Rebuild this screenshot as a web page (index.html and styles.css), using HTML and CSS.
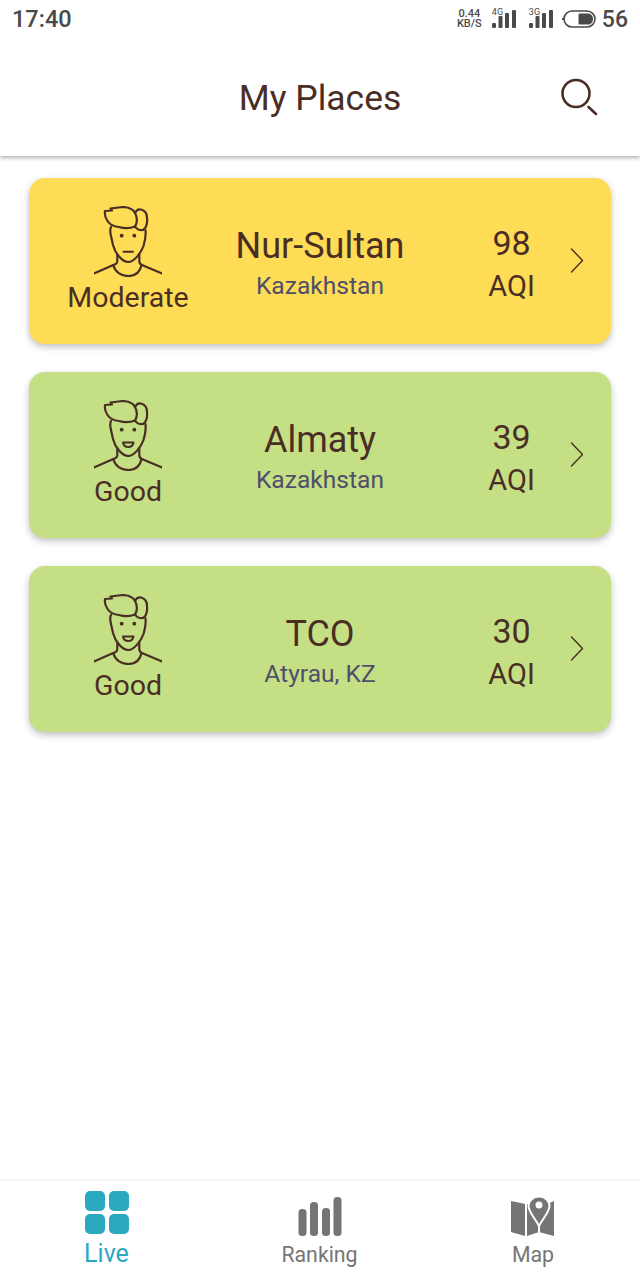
FILE: index.html
```html
<!DOCTYPE html>
<html lang="en">
<head>
<meta charset="utf-8">
<title>My Places</title>
<link rel="stylesheet" href="styles.css">
</head>
<body>
<svg class="defs" width="0" height="0" aria-hidden="true">
  <symbol id="head" viewBox="0 0 68 71">
    <g fill="none" stroke="currentColor" stroke-width="2.2" stroke-linecap="round" stroke-linejoin="round">
      <path d="M11 5 L18 4.5 L16.5 2.5 L29 1 C35 1.5 39.5 3.5 41 7 C42.5 4 45 3 47 3.5 C51 4.5 53 8 53 12 C53.5 17 52.5 21.5 49 24 C46 24.5 42.5 23 41 20.5 C36 22.5 30 22.5 25 21 C20 20.5 15.5 18 13.5 15 C11.5 12 10.5 8 11 5 Z"/>
      <path d="M41 7 C43.5 11 43.5 17 41 20.5"/>
      <path d="M17 21 C15.5 24 16.5 28 17 30 L19 39 C21 47 28 56 34.3 56 C40 56 47 47 49.5 40 C51 35 52 29 51.5 24"/>
      <path d="M23.3 49 L23.3 55 C23.3 57 21.5 58.5 19.3 59 L0.5 67.3"/>
      <path d="M45.3 48 L45.3 55 C45.3 57 46.5 58.5 48.5 59.3 L67.5 67.3"/>
      <path d="M19.3 59 C21 66 27 70 34.3 70 C41 70 46 66 47.5 59"/>
    </g>
    <circle cx="27.7" cy="29.7" r="1.9" fill="currentColor"/>
    <circle cx="40.3" cy="29.7" r="1.9" fill="currentColor"/>
  </symbol>
  <symbol id="flat" viewBox="0 0 68 71">
    <use href="#head" width="68" height="71"/>
    <path d="M29.5 45.7 H39" fill="none" stroke="currentColor" stroke-width="2" stroke-linecap="round"/>
  </symbol>
  <symbol id="smile" viewBox="0 0 68 71">
    <use href="#head" width="68" height="71"/>
    <path d="M29 42.5 H39.5 C39 45.5 37 47 34.3 47 C31.5 47 29.5 45.5 29 42.5 Z" fill="none" stroke="currentColor" stroke-width="2" stroke-linejoin="round"/>
  </symbol>
  <symbol id="chev" viewBox="0 0 14 25">
    <path d="M1.5 1 L12.5 12.5 L1.5 24" fill="none" stroke="currentColor" stroke-width="1.4" stroke-linecap="round" stroke-linejoin="round"/>
  </symbol>
  <symbol id="signal" viewBox="0 0 24 18">
    <rect x="0" y="13" width="4" height="5" rx="1.2"/>
    <rect x="6.5" y="6" width="4" height="12" rx="1"/>
    <rect x="13" y="3" width="4" height="15" rx="1"/>
    <rect x="20" y="0" width="4" height="18" rx="1"/>
  </symbol>
</svg>

<div class="status">
  <span class="clock">17:40</span>
  <div class="status-right">
    <span class="speed">0.44<br>KB/S</span>
    <span class="net net-4g"><span class="net-label">4G</span><svg class="signal"><use href="#signal"/></svg></span>
    <span class="net"><span class="net-label">3G</span><svg class="signal"><use href="#signal"/></svg></span>
    <svg class="battery" viewBox="0 0 34 18">
      <path d="M0 9 H2" stroke="#4a4a4a" stroke-width="2"/>
      <rect x="2" y="1" width="31" height="16" rx="8" fill="none" stroke="#4a4a4a" stroke-width="1.6"/>
      <path d="M18 3.5 H26 C29 3.5 31 6 31 9 C31 12 29 14.5 26 14.5 H18 C17 14.5 16.5 14 16.5 13 V5 C16.5 4 17 3.5 18 3.5 Z" fill="#4a4a4a"/>
    </svg>
    <span class="level">56</span>
  </div>
</div>

<header class="topbar">
  <h1 class="title">My Places</h1>
  <svg class="search" viewBox="0 0 38 38">
    <circle cx="16" cy="15.5" r="13.5" fill="none" stroke="currentColor" stroke-width="2.6"/>
    <path d="M28.5 29 L36 36" fill="none" stroke="currentColor" stroke-width="2.6" stroke-linecap="round"/>
  </svg>
</header>

<main class="places">
  <article class="card card-moderate">
    <div class="mood"><svg class="face"><use href="#flat"/></svg><span class="mood-label">Moderate</span></div>
    <div class="place"><span class="city">Nur-Sultan</span><span class="region">Kazakhstan</span></div>
    <div class="reading">
      <div class="aqi"><span class="aqi-value">98</span><span class="aqi-unit">AQI</span></div>
      <svg class="chevron"><use href="#chev"/></svg>
    </div>
  </article>
  <article class="card card-good">
    <div class="mood"><svg class="face"><use href="#smile"/></svg><span class="mood-label">Good</span></div>
    <div class="place"><span class="city">Almaty</span><span class="region">Kazakhstan</span></div>
    <div class="reading">
      <div class="aqi"><span class="aqi-value">39</span><span class="aqi-unit">AQI</span></div>
      <svg class="chevron"><use href="#chev"/></svg>
    </div>
  </article>
  <article class="card card-good">
    <div class="mood"><svg class="face"><use href="#smile"/></svg><span class="mood-label">Good</span></div>
    <div class="place"><span class="city">TCO</span><span class="region">Atyrau, KZ</span></div>
    <div class="reading">
      <div class="aqi"><span class="aqi-value">30</span><span class="aqi-unit">AQI</span></div>
      <svg class="chevron"><use href="#chev"/></svg>
    </div>
  </article>
</main>

<nav class="tabs">
  <div class="tab tab-live">
    <svg class="tab-icon" viewBox="0 0 44 43">
      <rect x="0" y="0" width="20" height="20" rx="5"/>
      <rect x="24" y="0" width="20" height="20" rx="5"/>
      <rect x="0" y="23" width="20" height="20" rx="5"/>
      <rect x="24" y="23" width="20" height="20" rx="5"/>
    </svg>
    <span class="tab-label">Live</span>
  </div>
  <div class="tab tab-ranking">
    <svg class="tab-icon" viewBox="0 0 44 40">
      <rect x="0.5" y="13" width="8" height="27" rx="3.5"/>
      <rect x="12" y="6" width="8" height="34" rx="3.5"/>
      <rect x="24" y="12" width="8" height="28" rx="3.5"/>
      <rect x="35.5" y="1" width="8" height="39" rx="3.5"/>
    </svg>
    <span class="tab-label">Ranking</span>
  </div>
  <div class="tab tab-map">
    <svg class="tab-icon" viewBox="0 0 44 40">
      <path d="M0 5 L14 8 V40 L0 36 Z"/>
      <path d="M16 8 L28 12 L43 5 V40 L28 36 L16 40 Z"/>
      <path d="M28 0.5 C33.5 0.5 38.5 4.5 38.5 10 C38.5 16 31.5 23 28 30 C24.5 23 17.5 16 17.5 10 C17.5 4.5 22.5 0.5 28 0.5 Z" stroke="#fff" stroke-width="2"/>
      <circle cx="28" cy="9" r="3.5" fill="#fff"/>
      <path d="M28 30 V36.5" stroke="#fff" stroke-width="2"/>
    </svg>
    <span class="tab-label">Map</span>
  </div>
</nav>
</body>
</html>
```
FILE: styles.css
```css
* { box-sizing: border-box; }
html, body { margin: 0; padding: 0; }
body {
  width: 640px;
  height: 1280px;
  display: flex;
  flex-direction: column;
  background: #fff;
  color: #4a2e25;
  font-family: Roboto, "Noto Sans", sans-serif;
  overflow: hidden;
}
.defs { position: absolute; }

.status {
  height: 38px;
  flex: none;
  position: relative;
  z-index: 1;
  background: #fff;
  display: flex;
  justify-content: space-between;
  align-items: center;
  padding: 0 12px;
  color: #4a4a4a;
}
.clock { font-size: 23.5px; font-weight: 500; }
.status-right { display: flex; align-items: center; }
.speed { font-size: 11px; line-height: 10px; font-weight: 500; text-align: center; width: 25px; margin-right: 10px; }
.net { position: relative; display: block; width: 24px; height: 18px; margin-right: 9px; }
.net-4g { margin-right: 13px; }
.net-label { position: absolute; left: 0; top: -2px; font-size: 9px; line-height: 9px; }
.signal { position: absolute; left: 0; top: 0; width: 24px; height: 18px; fill: #4a4a4a; }
.battery { width: 34px; height: 18px; }
.level { font-size: 23px; font-weight: 500; margin-left: 6px; }

.topbar {
  height: 118px;
  flex: none;
  position: relative;
  display: flex;
  align-items: center;
  justify-content: center;
  background: #fff;
  box-shadow: 0 2px 4px rgba(0, 0, 0, 0.3);
  padding-top: 2px;
}
.title { margin: 0; font-size: 35.5px; font-weight: 400; line-height: 44px; }
.search { position: absolute; right: 42px; top: 40px; width: 38px; height: 38px; }

.places {
  flex: 1;
  display: flex;
  flex-direction: column;
  gap: 28px;
  padding: 22px 29px 0;
}
.card {
  height: 166px;
  flex: none;
  display: grid;
  grid-template-columns: 198px 1fr 198px;
  border-radius: 16px;
  box-shadow: 0 3px 7px rgba(0, 0, 0, 0.25);
}
.card-moderate { background: #fedc56; }
.card-good { background: #c5e084; }

.mood { display: flex; flex-direction: column; align-items: center; padding-top: 28px; }
.face { width: 68px; height: 71px; }
.mood-label { font-size: 28.5px; line-height: 34px; margin-top: 4px; }

.place { display: flex; flex-direction: column; align-items: center; padding-top: 47px; }
.city { font-size: 36px; line-height: 42px; }
.region { font-size: 24.6px; line-height: 30px; margin-top: 4px; color: #4f4f6b; }

.reading { display: flex; align-items: flex-start; padding-left: 54px; }
.aqi { width: 89px; display: flex; flex-direction: column; align-items: center; padding-top: 44px; }
.aqi-value { font-size: 34px; line-height: 42px; }
.aqi-unit { font-size: 29px; line-height: 34px; margin-top: 5px; }
.chevron { width: 14px; height: 25px; margin: 70px 0 0 14px; }

.tabs {
  height: 101px;
  flex: none;
  display: grid;
  grid-template-columns: 213px 213px 214px;
  border-top: 2px solid #f6f6f6;
  color: #757575;
}
.tab { display: flex; flex-direction: column; align-items: center; padding-top: 15px; }
.tab-icon { width: 44px; height: 40px; fill: currentColor; }
.tab-label { font-size: 21.3px; line-height: 26px; margin-top: 6px; }
.tab-live { color: #2aa9bf; padding-top: 10px; }
.tab-live .tab-icon { height: 43px; }
.tab-live .tab-label { font-size: 25px; margin-top: 7px; }
```
